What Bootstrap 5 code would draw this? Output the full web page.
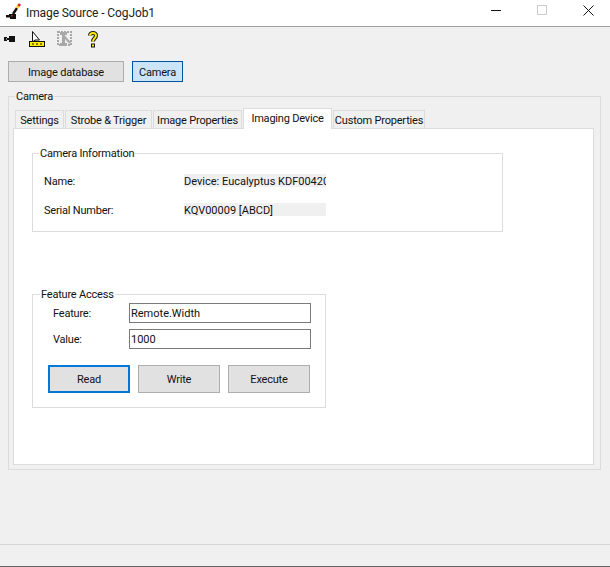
<!DOCTYPE html>
<html lang="en">
<head>
    <meta charset="UTF-8">
    <title>Image Source - CogJob1</title>
    <link href="https://cdn.jsdelivr.net/npm/bootstrap@5.3.0/dist/css/bootstrap.min.css" rel="stylesheet">
    <style>
        html, body { height: 100%; }
        body {
            background: #f0f0f0;
            font-family: Roboto, "Liberation Sans", sans-serif;
            font-size: 11px;
            line-height: 14px;
            letter-spacing: -.2px;
            color: #111;
            overflow: hidden;
        }
        .app-window { width: 610px; height: 567px; border-bottom: 1px solid #646464; }
        .title-bar {
            height: 27px;
            background: #fff;
            border-bottom: 1px solid #a0a0a0;
            padding-left: 6px;
        }
        .title-text { font-size: 12px; margin-left: 1px; color: #222; letter-spacing: -.1px; }
        .win-btns { margin-left: auto; margin-right: -1px; }
        .win-btn { width: 46px; height: 20px; }
        .tool-row { height: 24px; padding-left: 3px; gap: 8px; }
        .tool-icon { width: 18px; height: 20px; display: block; }
        .src-row { padding: 10px 0 0 8px; gap: 8px; }
        .src-btn {
            height: 21px;
            padding-top: 2px;
            border: 1px solid #adadad;
            background: #e1e1e1;
            color: #111;
            display: flex;
            align-items: center;
            justify-content: center;
        }
        .src-db { width: 116px; }
        .src-cam { width: 51px; background: #cce4f7; border-color: #005499; }
        .group-box {
            position: relative;
            border: 1px solid #dcdcdc;
        }
        .group-title {
            position: absolute;
            left: 6px;
            top: -7px;
            background: inherit;
            padding: 0 1px;
            white-space: nowrap;
        }
        .cam-group {
            margin: 14px 0 0 8px;
            width: 593px;
            height: 374px;
            background: #f0f0f0;
            padding: 11px 0 0 4px;
        }
        .tab-strip { height: 20px; padding-left: 2px; align-items: flex-end; }
        .tab-item {
            height: 18px;
            padding-top: 2px;
            background: #f0f0f0;
            border: 1px solid #dcdcdc;
            border-bottom: 0;
            margin-right: 1px;
            display: flex;
            align-items: center;
            justify-content: center;
            white-space: nowrap;
        }
        .tab-on { height: 21px; background: #fff; padding-bottom: 3px; margin-bottom: -1px; position: relative; z-index: 1; }
        .tab-page {
            width: 581px;
            height: 337px;
            background: #fff;
            border: 1px solid #dcdcdc;
            padding: 24px 0 0 18px;
        }
        .info-group { width: 471px; height: 79px; background: #fff; padding-top: 12px; }
        .info-row { height: 29px; padding-left: 11px; }
        .info-label { width: 140px; padding-top: 2px; }
        .info-value {
            width: 142px;
            height: 13px;
            padding-top: 1px;
            line-height: 13px;
            background: #f0f0f0;
            overflow: hidden;
            white-space: nowrap;
            letter-spacing: 0;
        }
        .feat-group { width: 294px; height: 114px; margin-top: 62px; background: #fff; padding-top: 5px; }
        .feat-group .group-title { left: 7px; }
        .feat-row { height: 26px; padding-left: 20px; }
        .feat-label { width: 76px; padding-top: 1px; }
        .feat-input {
            width: 182px;
            height: 20px;
            border: 1px solid #7a7a7a;
            padding: 0 1px;
            font-size: 11px;
            color: #111;
            background: #fff;
            outline: 0;
        }
        .act-row { padding: 13px 0 0 15px; gap: 8px; }
        .act-btn {
            width: 82px;
            height: 28px;
            border: 1px solid #adadad;
            background: #e1e1e1;
            color: #111;
            padding: 1px 0 0;
            font-size: 11px;
            letter-spacing: -.2px;
        }
        .act-main { border: 2px solid #0078d7; }
        .foot-line { margin-top: 74px; border-top: 1px solid #d7d7d7; }
    </style>
</head>
<body>
<div class="app-window">
    <div class="title-bar d-flex align-items-center">
        <svg width="19" height="20" viewBox="0 0 19 20">
            <path d="M7 11 L11 5" stroke="#111" stroke-width="2.4"/>
            <path d="M11 5 L13 2" stroke="#ffd23c" stroke-width="3"/>
            <path d="M12.500 3 L14 1" stroke="#d8202a" stroke-width="2.600"/>
            <path d="M0 12h3v-1h7v5h-6v-1.500h-4z" fill="#111"/>
            <rect x="5" y="12" width="1.500" height="1.500" fill="#d8202a"/>
        </svg>
        <span class="title-text">Image Source - CogJob1</span>
        <div class="win-btns d-flex align-self-start">
            <div class="win-btn d-flex align-items-center justify-content-center">
                <svg width="10" height="10"><path d="M0 5.500H10" stroke="#111"/></svg>
            </div>
            <div class="win-btn d-flex align-items-center justify-content-center">
                <svg width="10" height="10"><rect x=".5" y=".5" width="9" height="9" fill="none" stroke="#ccc"/></svg>
            </div>
            <div class="win-btn d-flex align-items-center justify-content-center">
                <svg width="11" height="11"><path d="M.5 .5L10.500 10.500M10.500 .5L.5 10.500" stroke="#111"/></svg>
            </div>
        </div>
    </div>

    <div class="tool-row d-flex align-items-center">
        <!-- camera -->
        <svg class="tool-icon" viewBox="0 0 18 20">
            <path d="M1 8h3v1h2v-2h6v6h-6v-2h-2v1h-3z" fill="#111"/>
            <rect x="3" y="9" width="1" height="2" fill="#888"/>
        </svg>
        <!-- pointer on ruler -->
        <svg class="tool-icon" viewBox="0 0 18 20">
            <path d="M3.500 2.500V13L6 11H10.500Z" fill="#fff" stroke="#111"/>
            <path d="M5.500 11L8 15" stroke="#111"/>
            <rect x=".5" y="12.500" width="15" height="5" fill="#ffec00" stroke="#111"/>
            <path d="M3 15h2M7 15h2M11 15h2" stroke="#111"/>
        </svg>
        <!-- disabled tool -->
        <svg class="tool-icon" viewBox="0 0 18 20">
            <rect x="3" y="3" width="13" height="13" fill="none" stroke="#a8a8a8" stroke-width="2" stroke-dasharray="2 1"/>
            <path d="M5 3H12V6H10V14H12V17H5V14H7V6H5Z" fill="#a8a8a8"/>
            <path d="M8 6L15 14" stroke="#a8a8a8" stroke-width="2"/>
        </svg>
        <!-- help -->
        <svg class="tool-icon" viewBox="0 0 18 20">
            <path d="M9 6.500C9 3 15 3 15 6.500C15 9.500 12 9 12 12.500" fill="none" stroke="#111" stroke-width="4"/>
            <path d="M9 6.500C9 3 15 3 15 6.500C15 9.500 12 9 12 12.500" fill="none" stroke="#ffec00" stroke-width="2"/>
            <rect x="10.500" y="15" width="3" height="3" fill="#ffec00" stroke="#111"/>
        </svg>
    </div>

    <div class="src-row d-flex">
        <div class="src-btn src-db">Image database</div>
        <div class="src-btn src-cam">Camera</div>
    </div>

    <div class="cam-group group-box">
        <span class="group-title">Camera</span>
        <div class="tab-strip d-flex">
            <div class="tab-item" style="width:49px">Settings</div>
            <div class="tab-item" style="width:87px">Strobe &amp; Trigger</div>
            <div class="tab-item" style="width:89px">Image Properties</div>
            <div class="tab-item tab-on" style="width:89px">Imaging Device</div>
            <div class="tab-item" style="width:92px">Custom Properties</div>
        </div>
        <div class="tab-page">
            <div class="info-group group-box">
                <span class="group-title">Camera Information</span>
                <div class="info-row d-flex align-items-center">
                    <div class="info-label">Name:</div>
                    <div class="info-value">Device: Eucalyptus KDF00420</div>
                </div>
                <div class="info-row d-flex align-items-center">
                    <div class="info-label">Serial Number:</div>
                    <div class="info-value">KQV00009 [ABCD]</div>
                </div>
            </div>
            <div class="feat-group group-box">
                <span class="group-title">Feature Access</span>
                <div class="feat-row d-flex align-items-center">
                    <div class="feat-label">Feature:</div>
                    <input class="feat-input" value="Remote.Width">
                </div>
                <div class="feat-row d-flex align-items-center">
                    <div class="feat-label">Value:</div>
                    <input class="feat-input" value="1000">
                </div>
                <div class="act-row d-flex">
                    <button class="act-btn act-main">Read</button>
                    <button class="act-btn">Write</button>
                    <button class="act-btn">Execute</button>
                </div>
            </div>
        </div>
    </div>
    <div class="foot-line"></div>
</div>
<script src="https://cdn.jsdelivr.net/npm/bootstrap@5.3.0/dist/js/bootstrap.bundle.min.js"></script>
</body>
</html>
